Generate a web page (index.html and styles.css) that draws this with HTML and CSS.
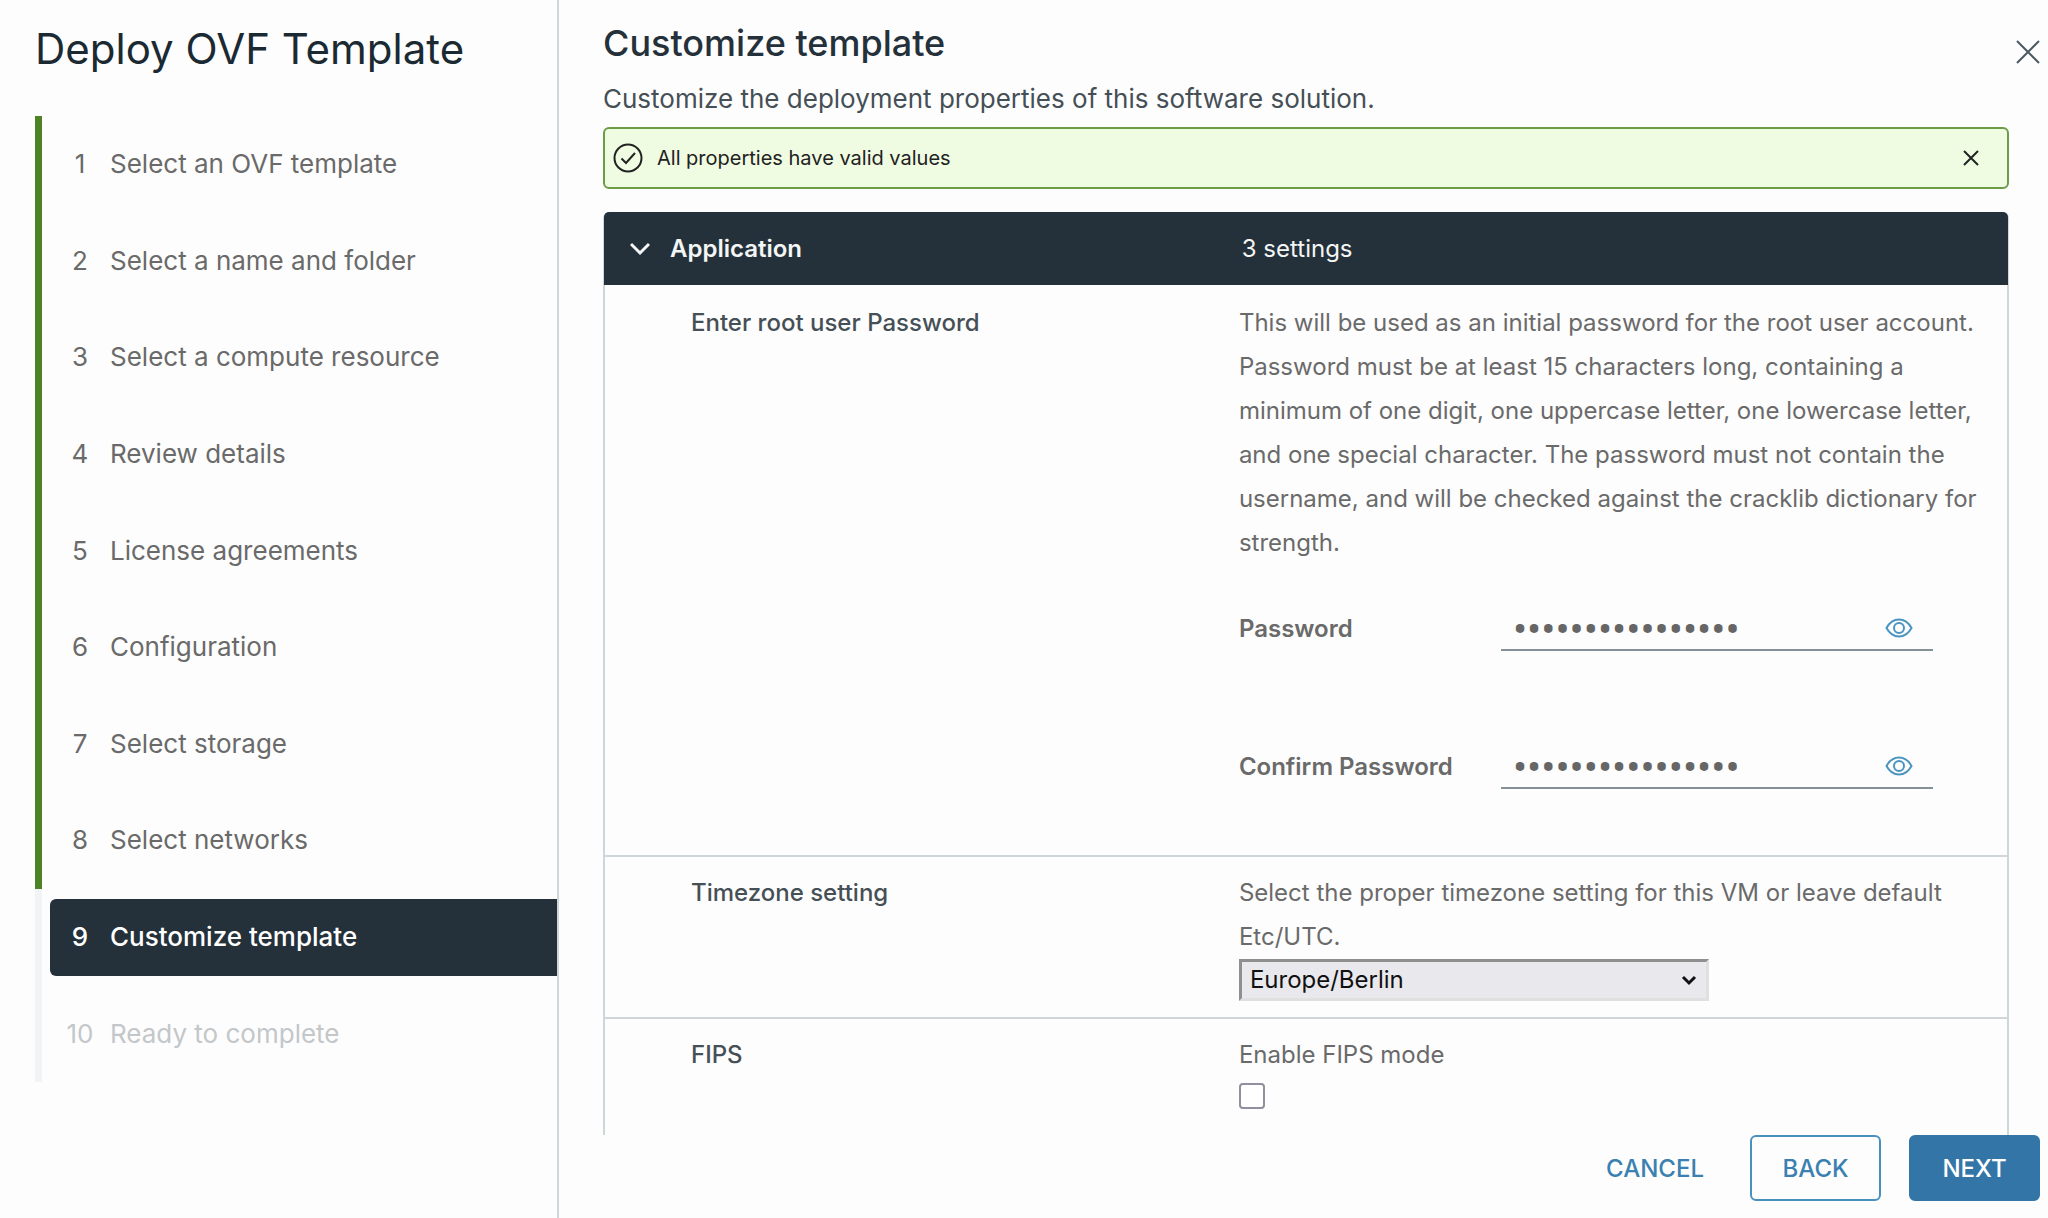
FILE: index.html
```
<!DOCTYPE html>
<html lang="en">
<head>
  <meta charset="UTF-8" />
  <meta name="viewport" content="width=device-width, initial-scale=1.0"/>
  <title>Deploy OVF Template</title>
  <link rel="stylesheet" href="styles.css">
</head>
<body>

<div class="wizard">
  <aside class="sidebar">
    <h1>Deploy OVF Template</h1>
    <ol class="steps">
      <li class="step done"><span class="num">1</span><a href="#">Select an OVF template</a></li>
      <li class="step done"><span class="num">2</span><a href="#">Select a name and folder</a></li>
      <li class="step done"><span class="num">3</span><a href="#">Select a compute resource</a></li>
      <li class="step done"><span class="num">4</span><a href="#">Review details</a></li>
      <li class="step done"><span class="num">5</span><a href="#">License agreements</a></li>
      <li class="step done"><span class="num">6</span><a href="#">Configuration</a></li>
      <li class="step done"><span class="num">7</span><a href="#">Select storage</a></li>
      <li class="step done"><span class="num">8</span><a href="#">Select networks</a></li>
      <li class="step current"><div class="pill"><span class="num">9</span><a href="#" aria-current="step">Customize template</a></div></li>
      <li class="step disabled"><span class="num">10</span><span>Ready to complete</span></li>
    </ol>
  </aside>

  <main class="main">
    <header class="page-header">
      <h2>Customize template</h2>
      <button class="icon-btn close" aria-label="Close">
        <svg width="24" height="24" viewBox="0 0 24 24"><path d="M1 1L23 23M23 1L1 23"/></svg>
      </button>
    </header>

    <div class="content">
      <p class="subtitle">Customize the deployment properties of this software solution.</p>

      <div class="alert" role="status">
        <svg class="alert-icon" width="30" height="30" viewBox="0 0 30 30">
          <circle cx="15" cy="15" r="13.5"/>
          <path d="M8.5 15.5L13 20L22 10"/>
        </svg>
        <span>All properties have valid values</span>
        <button class="icon-btn" aria-label="Dismiss">
          <svg width="16" height="16" viewBox="0 0 16 16"><path d="M1 1L15 15M15 1L1 15"/></svg>
        </button>
      </div>

      <section class="panel">
        <div class="row panel-head">
          <button class="toggle" aria-expanded="true">
            <svg width="20" height="14" viewBox="0 0 20 14"><path d="M1 2L10 11L19 2"/></svg>
            Application
          </button>
          <div class="value">3 settings</div>
        </div>

        <div class="row">
          <h3>Enter root user Password</h3>
          <div class="value">
            <p>This will be used as an initial password for the root user account. Password must be at least 15 characters long, containing a minimum of one digit, one uppercase letter, one lowercase letter, and one special character. The password must not contain the username, and will be checked against the cracklib dictionary for strength.</p>
            <div class="fields">
              <div class="field">
                <label for="password">Password</label>
                <div class="input-wrap">
                  <input type="password" id="password" value="0123456789abcdef">
                  <button class="icon-btn eye" aria-label="Show password">
                    <svg width="28" height="20" viewBox="0 0 28 20"><path d="M1.5 10C4.5 4.5 9 1.5 14 1.5S23.5 4.5 26.5 10C23.5 15.5 19 18.5 14 18.5S4.5 15.5 1.5 10Z"/><circle cx="14" cy="10" r="5"/></svg>
                  </button>
                </div>
              </div>
              <div class="field">
                <label for="confirm">Confirm Password</label>
                <div class="input-wrap">
                  <input type="password" id="confirm" value="0123456789abcdef">
                  <button class="icon-btn eye" aria-label="Show password">
                    <svg width="28" height="20" viewBox="0 0 28 20"><path d="M1.5 10C4.5 4.5 9 1.5 14 1.5S23.5 4.5 26.5 10C23.5 15.5 19 18.5 14 18.5S4.5 15.5 1.5 10Z"/><circle cx="14" cy="10" r="5"/></svg>
                  </button>
                </div>
              </div>
            </div>
          </div>
        </div>

        <div class="row">
          <h3>Timezone setting</h3>
          <div class="value">
            <label for="timezone">Select the proper timezone setting for this VM or leave default Etc/UTC.</label>
            <div class="select-wrap">
              <select id="timezone">
                <option>Europe/Berlin</option>
              </select>
              <svg width="16" height="11" viewBox="0 0 16 11"><path d="M2 2L8 8L14 2"/></svg>
            </div>
          </div>
        </div>

        <div class="row">
          <h3>FIPS</h3>
          <div class="value">
            <label for="fips">Enable FIPS mode</label>
            <input type="checkbox" id="fips">
          </div>
        </div>
      </section>
    </div>

    <footer class="actions">
      <button class="btn link">CANCEL</button>
      <button class="btn outline">BACK</button>
      <button class="btn primary">NEXT</button>
    </footer>
  </main>
</div>

</body>
</html>
```
FILE: styles.css
```
* {
  box-sizing: border-box;
}

body {
  margin: 0;
  background: #fdfdfd;
  color: #6a6a6a;
  font-family: Inter, "Open Sans", sans-serif;
  font-size: 24px;
  line-height: 44px;
}

h1, h2, h3, p {
  margin: 0;
}

button, input, select {
  font: inherit;
}

button {
  cursor: pointer;
}

svg {
  fill: none;
  stroke: currentColor;
  stroke-width: 2;
}

a {
  color: inherit;
  text-decoration: none;
}

.wizard {
  display: grid;
  grid-template-columns: 559px minmax(0, 1fr);
  min-height: 100vh;
}

/* step list */

.sidebar {
  display: flex;
  flex-direction: column;
  padding: 25px 0 136px 35px;
  border-right: 2px solid #cfd6da;
}

.sidebar h1 {
  margin-bottom: 43px;
  color: #1b2a32;
  font-size: 42px;
  font-weight: 400;
  line-height: 48px;
}

.steps {
  flex: 1;
  display: grid;
  grid-auto-rows: 1fr;
  margin: 0;
  padding: 0;
  list-style: none;
}

.step {
  display: flex;
  align-items: center;
  padding-left: 8px;
  border-left: 7px solid #f1f3f5;
  font-size: 26px;
}

.step.done {
  border-color: #4f8225;
}

.step.disabled {
  color: #c3c7ca;
}

.num {
  width: 60px;
  text-align: center;
}

.pill {
  flex: 1;
  display: flex;
  align-items: center;
  height: 77px;
  border-radius: 6px 0 0 6px;
  background: #25313a;
  color: #fff;
  font-weight: 500;
}

/* right side */

.main {
  display: flex;
  flex-direction: column;
  padding: 21px 8px 17px 44px;
}

.page-header {
  display: flex;
  justify-content: space-between;
  align-items: center;
  margin-bottom: 16px;
  color: #25313a;
}

.page-header h2 {
  font-size: 36px;
  font-weight: 500;
}

.icon-btn {
  display: flex;
  padding: 0;
  border: 0;
  background: none;
  color: inherit;
}

.close {
  margin-top: 18px;
  color: #4b5a63;
}

.content {
  flex: 1;
  display: flex;
  flex-direction: column;
  padding-right: 31px;
}

.subtitle {
  margin-bottom: 10px;
  color: #454f56;
  font-size: 26px;
  line-height: 36px;
}

.alert {
  display: flex;
  align-items: center;
  gap: 14px;
  height: 62px;
  margin-bottom: 23px;
  padding: 0 28px 0 8px;
  border: 2px solid #6c9c45;
  border-radius: 6px;
  background: #f0fce2;
  color: #222;
  font-size: 20px;
}

.alert .icon-btn {
  margin-left: auto;
}

.panel {
  flex: 1;
  border: 2px solid #cfd6da;
  border-width: 0 2px;
  border-radius: 6px 6px 0 0;
}

.row {
  display: grid;
  grid-template-columns: 45% minmax(0, 1fr);
  padding: 14px 0 16px;
  border-top: 2px solid #cfd6da;
}

.panel-head {
  align-items: center;
  margin: 0 -1px;
  padding: 15px 0 14px;
  border: 0;
  border-radius: 5px 5px 0 0;
  background: #25313a;
  color: #f4f5f5;
}

.panel-head + .row {
  padding-top: 16px;
  border-top: 0;
}

.row h3 {
  padding-left: 86px;
  color: #454f56;
  font-size: 24px;
  font-weight: 500;
}

.value {
  padding: 0 24px 0 3px;
}

.panel-head .value {
  padding-left: 6px;
}

.value label {
  display: block;
}

.toggle {
  display: flex;
  align-items: center;
  gap: 20px;
  padding: 0 0 0 26px;
  border: 0;
  background: none;
  color: #f4f5f5;
  font-weight: 600;
}

.toggle svg {
  stroke-width: 3;
}

.fields {
  display: grid;
  gap: 94px;
  padding: 42px 50px 50px 0;
}

.field {
  display: flex;
  align-items: center;
  gap: 16px;
  min-width: 0;
}

.field label {
  flex: 0 0 246px;
  font-weight: 600;
}

.input-wrap {
  flex: 1;
  display: flex;
  align-items: center;
  min-width: 0;
  height: 44px;
  padding-right: 20px;
  border-bottom: 2px solid #859198;
}

.input-wrap input {
  flex: 1;
  min-width: 0;
  height: 42px;
  padding: 4px 12px 0;
  border: 0;
  outline: 0;
  background: none;
  color: #666;
  font-family: Roboto, sans-serif;
  font-size: 42px; /* bigger dots */
}

.eye {
  color: #4a94c0;
}

.select-wrap {
  display: grid;
  align-items: center;
  width: 470px;
  max-width: 100%;
}

.select-wrap select,
.select-wrap svg {
  grid-area: 1 / 1;
}

.select-wrap select {
  height: 42px;
  padding: 0 8px;
  border: 3px solid;
  border-color: #8f8f8f #e0e0e0 #e0e0e0 #8f8f8f;
  background: #e9e9ed;
  color: #111;
  line-height: 34px;
  appearance: none;
}

.select-wrap svg {
  justify-self: end;
  margin-right: 12px;
  color: #111;
  stroke-width: 3;
  pointer-events: none;
}

input[type="checkbox"] {
  display: block;
  width: 26px;
  height: 26px;
  margin: 6px 0 0;
  border: 2px solid #8f8f9d;
  border-radius: 4px;
  background: #fff;
  appearance: none;
}

/* buttons */

.actions {
  display: flex;
  justify-content: flex-end;
  gap: 28px;
}

.btn {
  min-width: 131px;
  height: 66px;
  padding: 2px 16px 0;
  border: 2px solid transparent;
  border-radius: 6px;
  background: none;
  color: #3a80b0;
  font-weight: 500;
}

.btn.outline {
  border-color: #4a90bd;
}

.btn.primary {
  border-color: #3475a8;
  background: #3475a8;
  color: #fff;
}
```
